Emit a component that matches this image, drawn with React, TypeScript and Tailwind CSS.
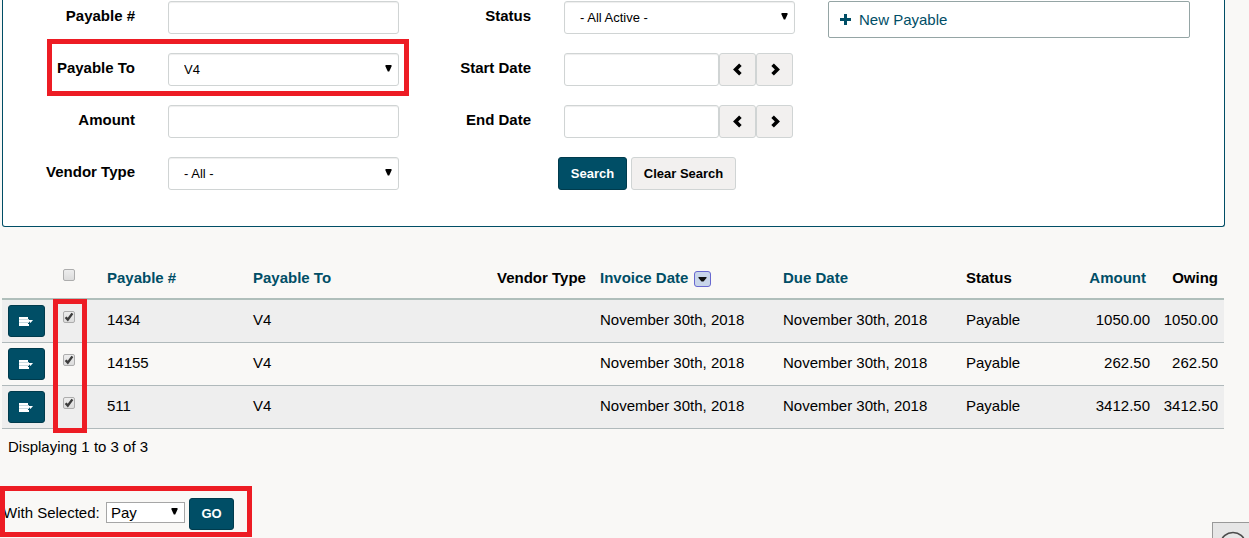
import { useState, type ReactNode } from "react";

const control =
  "h-[33px] w-full rounded-[3px] border border-[#d0d4d4] bg-white text-[13px] text-black shadow-[inset_0_1px_1px_rgba(0,0,0,0.07)]";

const columnHead = "pb-[10px] pt-[10px] px-[6px] align-top whitespace-nowrap font-bold";
const cell = "px-[6px] pt-[10px] align-top whitespace-nowrap";

const payables = [
  { id: "1434", to: "V4", invoice: "November 30th, 2018", due: "November 30th, 2018", status: "Payable", amount: "1050.00", owing: "1050.00" },
  { id: "14155", to: "V4", invoice: "November 30th, 2018", due: "November 30th, 2018", status: "Payable", amount: "262.50", owing: "262.50" },
  { id: "511", to: "V4", invoice: "November 30th, 2018", due: "November 30th, 2018", status: "Payable", amount: "3412.50", owing: "3412.50" },
];

function Field({ id, label, highlighted, children }: { id: string; label: string; highlighted?: boolean; children: ReactNode }) {
  return (
    <div className="relative grid grid-cols-[1fr_2fr]">
      <label htmlFor={id} className="pt-[5px] text-right font-bold whitespace-nowrap">
        {label}
      </label>
      <div className="pl-[33px]">{children}</div>
      {highlighted && (
        <div className="pointer-events-none absolute -top-[14px] -right-[10px] -bottom-[10px] left-[44px] border-5 border-[#ed1c24]" />
      )}
    </div>
  );
}

function SelectArrow({ className }: { className: string }) {
  return (
    <svg viewBox="0 0 7 7" className={`pointer-events-none absolute h-[7px] w-[7px] ${className}`} aria-hidden="true">
      <path d="M0.500 0h6v1.500L4.200 6.500H2.800L0.500 1.500z" fill="#000" />
    </svg>
  );
}

function Dropdown({ id, options }: { id: string; options: string[] }) {
  return (
    <div className="relative">
      <select id={id} className={`${control} appearance-none pl-[15px]`}>
        {options.map((o) => (
          <option key={o}>{o}</option>
        ))}
      </select>
      <SelectArrow className="top-[12px] right-[7px]" />
    </div>
  );
}

function Chevron({ back }: { back?: boolean }) {
  return (
    <svg viewBox="0 0 10 13" className="h-[13px] w-[10px]" fill="none" stroke="#000" strokeWidth="3.6" aria-hidden="true">
      <path d={back ? "M7.4 1.7 2.6 6.5l4.800 4.800" : "M2.6 1.7l4.800 4.800-4.800 4.800"} />
    </svg>
  );
}

function DateField({ id }: { id: string }) {
  const step = "flex h-[33px] w-[37px] items-center justify-center rounded-[3px] border border-[#d0d4d4] bg-[#f2f0ef]";
  return (
    <div className="flex pr-[2px]">
      <input id={id} type="text" className={`${control} min-w-0 flex-1 px-2`} />
      <button type="button" aria-label="Previous day" className={step}>
        <Chevron back />
      </button>
      <button type="button" aria-label="Next day" className={step}>
        <Chevron />
      </button>
    </div>
  );
}

function Checkbox({ label, checked, onChange }: { label: string; checked: boolean; onChange: () => void }) {
  return (
    <span className="relative block h-[12px] w-[12px]">
      <input
        type="checkbox"
        aria-label={label}
        checked={checked}
        onChange={onChange}
        className="block h-[12px] w-[12px] appearance-none rounded-[2px] border border-[#adadad] bg-linear-to-b from-[#ededed] to-[#dcdcdc]"
      />
      {checked && (
        <svg viewBox="0 0 12 12" className="pointer-events-none absolute inset-0 h-[12px] w-[12px]" fill="none" stroke="#3c3c3c" strokeWidth="2.4" aria-hidden="true">
          <path d="M2.6 6.2l2.2 2.400 4.600-6.200" />
        </svg>
      )}
    </span>
  );
}

function ActionsIcon() {
  return (
    <svg viewBox="0 0 15 11" className="h-[11px] w-[15px]" aria-hidden="true">
      <path d="M0 1h9v2H0zM0 4h10v2H0zM0 7h9v1H0zM0 8h10v2H0z" fill="#fff" />
      <path d="M0 3h10v1H0zM0 6h10v1H0z" fill="#c9dae0" />
      <path d="M9 4h5L11.500 7z" fill="#fff" />
    </svg>
  );
}

export default function App() {
  const [selected, setSelected] = useState<string[]>(payables.map((p) => p.id));
  const [all, setAll] = useState(false);

  const toggle = (id: string) =>
    setSelected((s) => (s.includes(id) ? s.filter((x) => x !== id) : [...s, id]));
  const toggleAll = () => {
    setSelected(all ? [] : payables.map((p) => p.id));
    setAll(!all);
  };

  return (
    <main className="min-h-screen bg-[#f9f8f6] font-['Liberation_Sans',Arial,sans-serif] text-[15px] leading-[20px] text-black">
      <form
        onSubmit={(e) => e.preventDefault()}
        className="mr-6 ml-[2px] grid grid-cols-[396fr_396fr_429fr] rounded-b-[3px] border border-t-0 border-[#004e66] bg-white pt-px pb-9"
      >
        <div className="flex flex-col gap-[19px]">
          <Field id="number" label="Payable #">
            <input id="number" type="text" className={`${control} block px-2`} />
          </Field>
          <Field id="payee" label="Payable To" highlighted>
            <Dropdown id="payee" options={["V4"]} />
          </Field>
          <Field id="amount" label="Amount">
            <input id="amount" type="text" className={`${control} block px-2`} />
          </Field>
          <Field id="vendor" label="Vendor Type">
            <Dropdown id="vendor" options={["- All -"]} />
          </Field>
        </div>
        <div className="flex flex-col gap-[19px]">
          <Field id="status" label="Status">
            <Dropdown id="status" options={["- All Active -"]} />
          </Field>
          <Field id="start" label="Start Date">
            <DateField id="start" />
          </Field>
          <Field id="end" label="End Date">
            <DateField id="end" />
          </Field>
          <div className="grid grid-cols-[1fr_2fr]">
            <div className="col-start-2 flex gap-1 pl-[27px] text-[13px] font-bold">
              <button type="submit" className="h-[33px] w-[69px] rounded-[3px] border border-[#003b4d] bg-[#004e66] text-white">
                Search
              </button>
              <button type="reset" className="h-[33px] w-[105px] rounded-[3px] border border-[#d0d4d4] bg-[#f2f0ef] whitespace-nowrap">
                Clear Search
              </button>
            </div>
          </div>
        </div>
        <div className="pr-[34px] pl-[33px]">
          <a href="#new" className="flex h-[37px] items-center gap-2 rounded-[2px] border border-[#95a5a5] px-[11px] text-[#004e66]">
            <svg viewBox="0 0 11 11" className="h-[11px] w-[11px]" aria-hidden="true">
              <path d="M4 0h3v4h4v3H7v4H4V7H0V4h4z" fill="#004e66" />
            </svg>
            New Payable
          </a>
        </div>
      </form>

      <div className="mt-[31px] mr-[25px] ml-[2px]">
        <table className="w-full table-fixed border-separate border-spacing-0 text-left">
          <colgroup>
            <col className="w-[55px]" />
            <col className="w-[44px]" />
            <col className="w-[146px]" />
            <col className="w-[244px]" />
            <col className="w-[103px]" />
            <col className="w-[183px]" />
            <col className="w-[183px]" />
            <col className="w-[122px]" />
            <col className="w-[74px]" />
            <col className="w-[68px]" />
          </colgroup>
          <thead className="[&_th]:border-b-2 [&_th]:border-[#b0bfbb]">
            <tr>
              <th className={columnHead} />
              <th className="px-[6px] pt-[11px] align-top">
                <Checkbox label="Select all" checked={all} onChange={toggleAll} />
              </th>
              <th className={columnHead}><a href="#number" className="text-[#004e66]">Payable #</a></th>
              <th className={columnHead}><a href="#payee" className="text-[#004e66]">Payable To</a></th>
              <th className={columnHead}>Vendor Type</th>
              <th className={columnHead}>
                <a href="#invoice" className="flex gap-[6px] text-[#004e66]">
                  Invoice Date
                  <span className="mt-[3px] flex h-4 w-[17px] items-center justify-center rounded-[3px] border border-[#6868d0] bg-[#c8d5ea]">
                    <svg viewBox="0 0 9 5" className="h-[5px] w-[9px]" aria-hidden="true">
                      <path d="M0.500 0h8v1L5.500 4.500h-2L0.500 1z" fill="#111" />
                    </svg>
                  </span>
                </a>
              </th>
              <th className={columnHead}><a href="#due" className="text-[#004e66]">Due Date</a></th>
              <th className={columnHead}>Status</th>
              <th className={`${columnHead} text-right`}><a href="#total" className="pr-1 text-[#004e66]">Amount</a></th>
              <th className={`${columnHead} text-right`}>Owing</th>
            </tr>
          </thead>
          <tbody className="[&_td]:border-b [&_td]:border-[#b0b9bb]">
            {payables.map((p, i) => (
              <tr key={p.id} className="odd:bg-[#eeeeee]">
                <td className="px-[6px] py-[5px]">
                  <button type="button" aria-label={`Actions for ${p.id}`} className="flex h-8 w-[37px] items-center justify-center rounded-[3px] border border-[#003b4d] bg-[#004e66]">
                    <ActionsIcon />
                  </button>
                </td>
                <td className="relative px-[6px] pt-[11px] align-top">
                  <Checkbox label={`Select ${p.id}`} checked={selected.includes(p.id)} onChange={() => toggle(p.id)} />
                  {i === 0 && (
                    <div className="pointer-events-none absolute -top-px -left-1 z-10 h-[134px] w-[34px] border-5 border-[#ed1c24]" />
                  )}
                </td>
                <td className={cell}>{p.id}</td>
                <td className={cell}>{p.to}</td>
                <td className={cell} />
                <td className={cell}>{p.invoice}</td>
                <td className={cell}>{p.due}</td>
                <td className={cell}>{p.status}</td>
                <td className={`${cell} text-right`}>{p.amount}</td>
                <td className={`${cell} text-right`}>{p.owing}</td>
              </tr>
            ))}
          </tbody>
        </table>
        <p className="mt-2 pl-[6px]">Displaying 1 to 3 of 3</p>
      </div>

      <div className="mt-[29px] flex">
        <form onSubmit={(e) => e.preventDefault()} className="relative flex items-center gap-1 py-3 pr-[18px] pb-[7px] pl-[3px]">
          <div className="flex items-center gap-1 pb-[3px]">
            <label htmlFor="bulk" className="w-[99px] whitespace-nowrap">With Selected:</label>
            <div className="relative">
              <select id="bulk" className="block h-[21px] w-[79px] appearance-none border border-[#a6a6a6] bg-white pl-1 leading-[18px]">
                <option>Pay</option>
              </select>
              <SelectArrow className="top-[6px] right-[7px]" />
            </div>
          </div>
          <button type="submit" className="h-8 w-[45px] rounded-[3px] border border-[#003b4d] bg-[#004e66] text-[13px] font-bold text-white">
            GO
          </button>
          <div className="pointer-events-none absolute inset-0 border-5 border-[#ed1c24]" />
        </form>
      </div>

      <button type="button" aria-label="Help" className="fixed right-0 bottom-0 h-4 w-[37px] overflow-hidden border-t border-l border-[#999999] bg-[#e6e6e6]">
        <svg viewBox="0 0 36 15" className="block h-[15px] w-9" fill="none" stroke="#4a4a4a" strokeWidth="1.600" aria-hidden="true">
          <ellipse cx="20" cy="19" rx="11.500" ry="9.500" />
        </svg>
      </button>
    </main>
  );
}
